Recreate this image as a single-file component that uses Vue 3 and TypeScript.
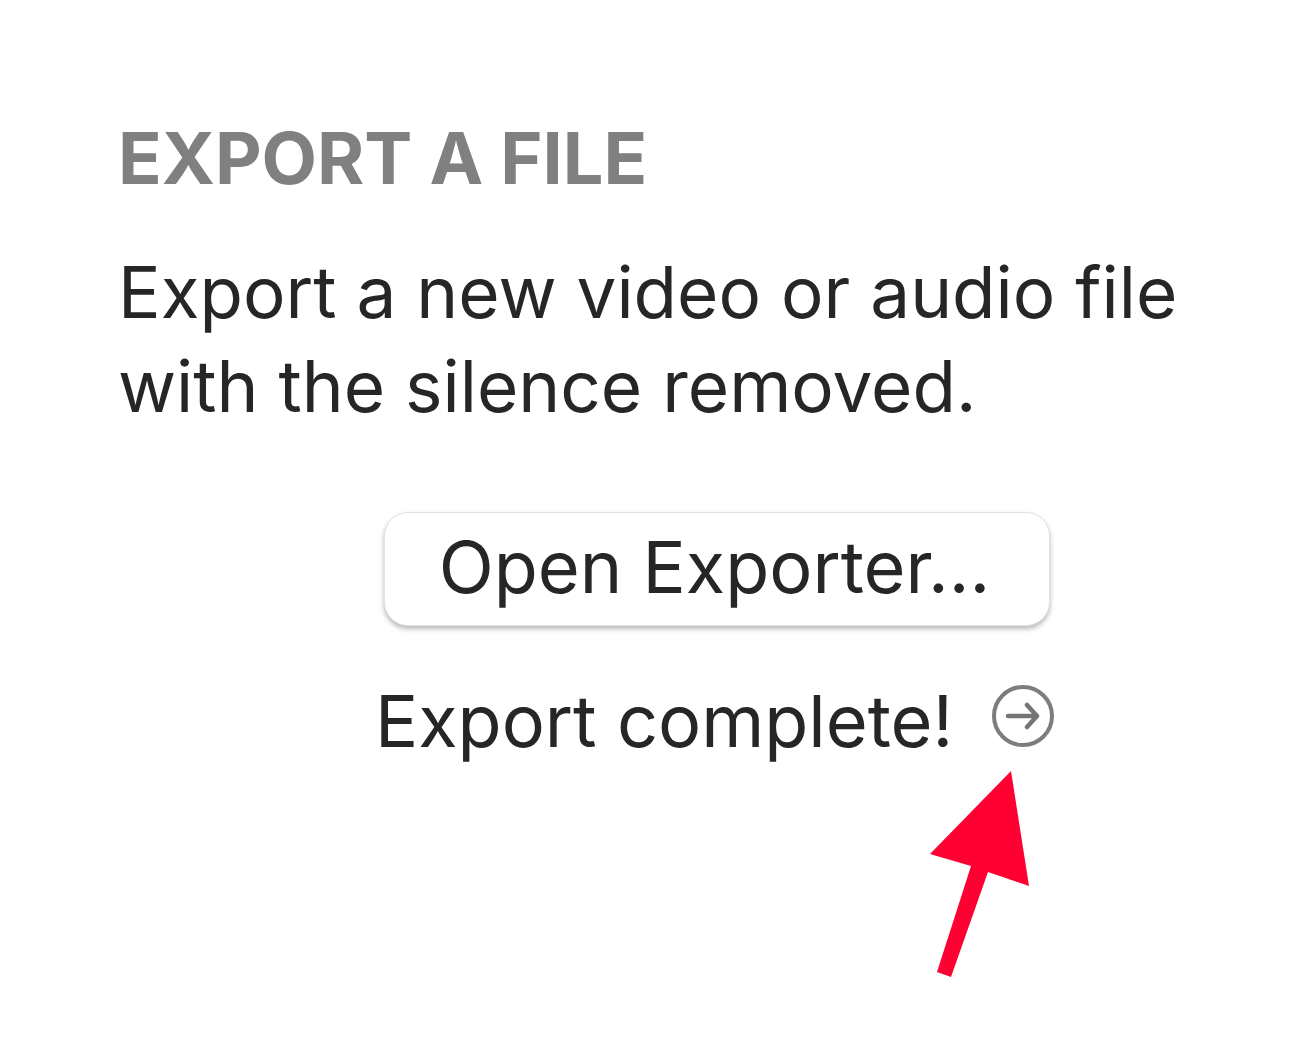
<script setup lang="ts">
const title = "EXPORT A FILE"
const description = "Export a new video or audio file with the silence removed."
</script>

<template>
  <div class="panel">
    <h2 class="title">{{ title }}</h2>
    <p class="desc">{{ description }}</p>
    <div class="actions">
      <button class="open-btn">Open Exporter...</button>
      <div class="status">
        <span>Export complete!</span>
        <span class="reveal">
          <svg width="64" height="64" viewBox="0 0 64 64" fill="none">
            <circle cx="32" cy="32" r="29" stroke="#7d7d7d" stroke-width="4" />
            <path d="M17 32H46M36 21L46 32L36 43" stroke="#757575" stroke-width="4.5" stroke-linecap="round" stroke-linejoin="round" />
          </svg>
          <svg class="arrow" width="112" height="212" viewBox="0 0 112 212">
            <path d="M90 2L108 117L67 103L30 208L16 203L50 97L9 85Z" fill="#ff0033" />
          </svg>
        </span>
      </div>
    </div>
  </div>
</template>

<style scoped>
.panel {
  box-sizing: border-box;
  width: 1300px;
  height: 1060px;
  padding: 121px 0 0 118px;
  font-family: Inter, "Liberation Sans", sans-serif;
  color: #262626;
}

.title {
  margin: 0;
  font-size: 72px;
  line-height: 74px;
  font-weight: 700;
  color: #808080;
}

.desc {
  margin: 50px 0 0;
  width: 1120px;
  font-size: 71px;
  line-height: 94px;
}

.actions {
  margin-top: 79px;
  margin-left: 257px;
  width: 700px;
}

.open-btn {
  display: block;
  box-sizing: border-box;
  width: 666px;
  height: 114px;
  margin-left: 9px;
  padding: 0 5px 6px 0;
  border: 1px solid #e2e2e2;
  border-radius: 24px;
  background: #fff;
  box-shadow: 0 3px 5px rgba(0, 0, 0, 0.28);
  font: inherit;
  font-size: 72px;
  color: #262626;
}

.status {
  display: flex;
  align-items: center;
  gap: 38px;
  margin-top: 45px;
  font-size: 72px;
  line-height: 100px;
  white-space: nowrap;
}

.reveal {
  position: relative;
  display: flex;
  top: -5px;
}

.arrow {
  position: absolute;
  left: -70px;
  top: 85px;
}
</style>

<style>
body {
  background: #fff;
}
</style>
